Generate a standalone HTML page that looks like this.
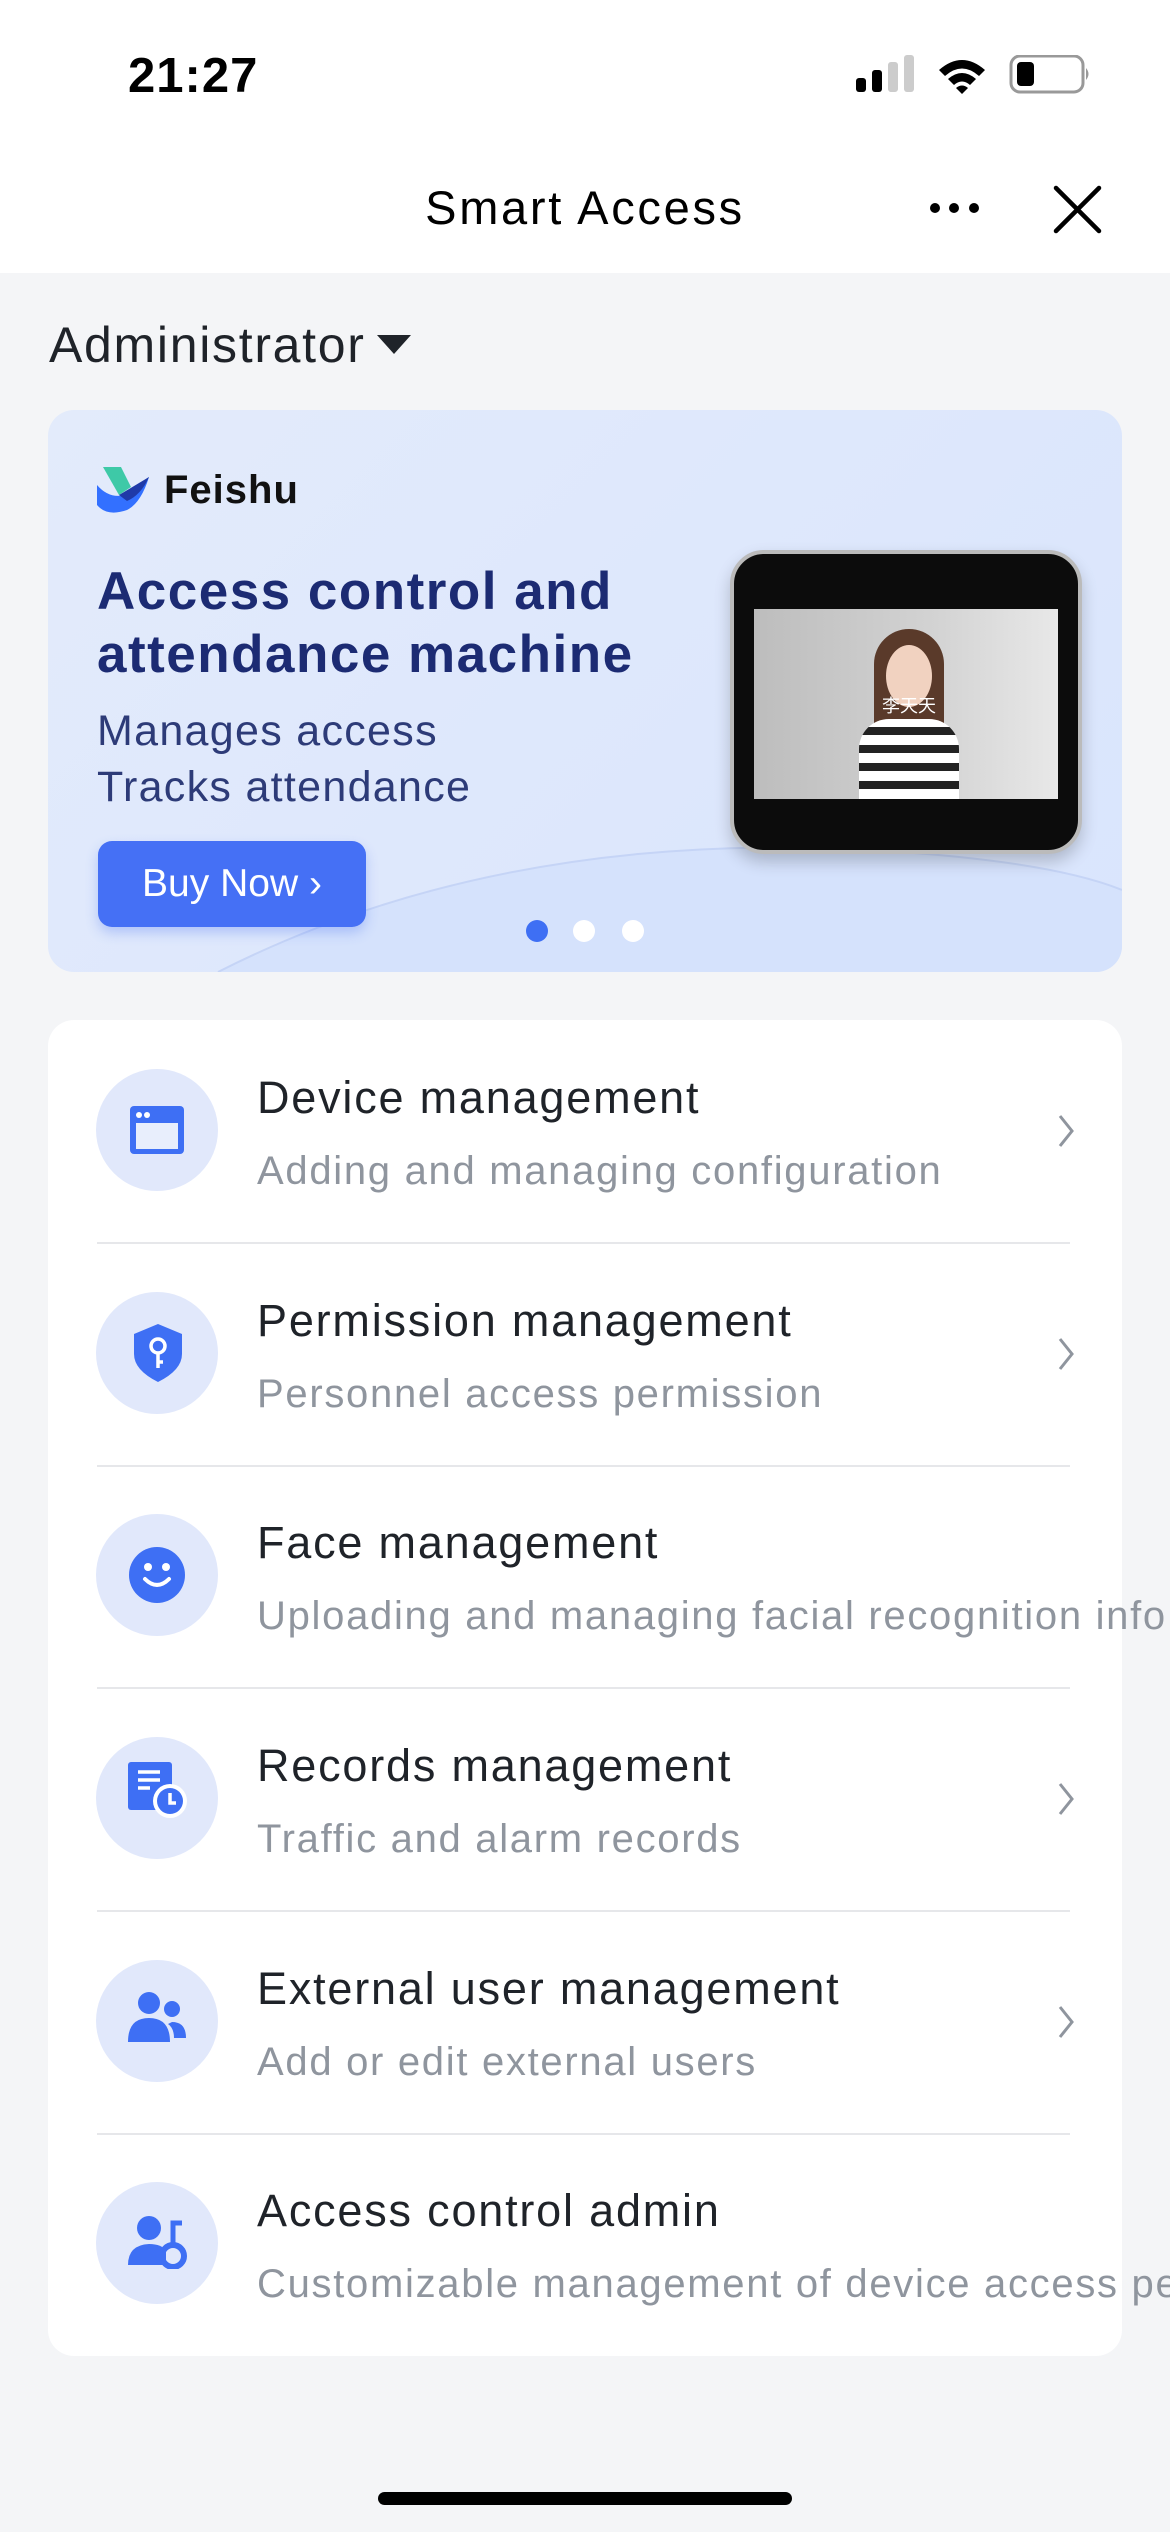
<!DOCTYPE html>
<html><head><meta charset="utf-8"><style>
*{margin:0;padding:0;box-sizing:border-box}
html,body{overflow:hidden}
body{width:1170px;height:2532px;overflow:hidden;background:#f4f5f7;font-family:"Liberation Sans","Noto Sans CJK SC",sans-serif;position:relative}
.abs{position:absolute}
.hdr{left:0;top:0;width:1170px;height:273px;background:#fff}
.t{white-space:nowrap;line-height:1}
.card{left:48px;top:1020px;width:1074px;height:1336px;background:#fff;border-radius:26px}
.ic{width:122px;height:122px;border-radius:50%;background:#e1e8fb;left:96px}
.ttl{left:257px;font-size:45px;color:#1f2329;letter-spacing:1.8px}
.sub{left:257px;font-size:40px;color:#8f959e;letter-spacing:1.7px}
.sep{left:97px;width:973px;height:2px;background:#e6e7ea}
.chev{left:1052px}
.clip{left:0;top:0;width:1170px;height:2532px;overflow:hidden}
</style></head><body>
<div class="abs clip">
<div class="abs hdr"></div>
<div class="abs t" style="left:128px;top:52px;font-size:49px;font-weight:bold;color:#000;letter-spacing:1px">21:27</div>
<svg class="abs" style="left:850px;top:55px" width="240" height="45" viewBox="0 0 240 45">
<rect x="6" y="23" width="10" height="14" rx="3" fill="#000"/>
<rect x="22" y="15" width="10" height="22" rx="3" fill="#000"/>
<rect x="38" y="7" width="10" height="30" rx="3" fill="#ccc"/>
<rect x="54" y="0" width="10" height="37" rx="3" fill="#ccc"/>
<path d="M89 15 Q112 -5 135 15 L129 21 Q112 6 95 21Z" fill="#000"/>
<path d="M98 24 Q112 12 126 24 L120 30 Q112 23 104 30Z" fill="#000"/>
<path d="M106 33 Q112 28 118 33 L112 39Z" fill="#000"/>
<rect x="161" y="1" width="72" height="36" rx="9" fill="none" stroke="#999" stroke-width="3"/>
<rect x="167" y="7" width="17" height="24" rx="4" fill="#000"/>
<path d="M236 13 Q241 19 236 25Z" fill="#999"/>
</svg>
<div class="abs t" style="left:0;width:1170px;text-align:center;top:184px;font-size:47px;color:#000;letter-spacing:2.7px">Smart Access</div>
<svg class="abs" style="left:925px;top:198px" width="60" height="20"><circle cx="10" cy="10" r="5"/><circle cx="29" cy="10" r="5"/><circle cx="49" cy="10" r="5"/></svg>
<svg class="abs" style="left:1050px;top:182px" width="55" height="55"><path d="M6 6L49 49M49 6L6 49" stroke="#000" stroke-width="4.5" stroke-linecap="round"/></svg>
<div class="abs t" style="left:49px;top:320px;font-size:50px;color:#1f2329;letter-spacing:1.7px">Administrator</div>
<svg class="abs" style="left:377px;top:335px" width="34" height="22"><path d="M0 0H34L17 19Z" fill="#1f2329"/></svg>

<div class="abs" style="left:48px;top:410px;width:1074px;height:562px;border-radius:26px;overflow:hidden;background:linear-gradient(135deg,#e3ebfb,#dde7fc 60%,#d9e5fd)">
<svg class="abs" style="left:0;top:0" width="1074" height="562"><path d="M170 562 Q450 420 820 440 Q1000 450 1074 480 L1074 562Z" fill="#d5e2fc"/><path d="M170 562 Q450 420 820 440 Q1000 450 1074 480" fill="none" stroke="#c5d4f6" stroke-width="2"/></svg>
<svg class="abs" style="left:49px;top:55px" width="60" height="50"><path d="M6 2H24L34 22L22 30Z" fill="#3ec9a7"/><path d="M0 20Q12 34 28 30L52 12Q44 38 30 45Q10 52 0 40Z" fill="#3370ff"/><path d="M22 30L52 12Q44 30 30 36Z" fill="#1f3aa8"/></svg>
<div class="abs t" style="left:116px;top:60px;font-size:40px;font-weight:bold;color:#111;letter-spacing:1px">Feishu</div>
<div class="abs t" style="left:49px;top:150px;font-size:53px;font-weight:bold;color:#1c2b73;line-height:63px;letter-spacing:1.5px">Access control and<br>attendance machine</div>
<div class="abs t" style="left:49px;top:293px;font-size:43px;color:#2d3b78;line-height:56px;letter-spacing:1.3px">Manages access<br>Tracks attendance</div>
<div class="abs t" style="left:50px;top:431px;width:268px;height:86px;border-radius:14px;background:#4570f5;color:#fff;font-size:39px;text-align:center;line-height:86px;box-shadow:0 6px 12px rgba(69,112,245,.3)">Buy Now ›</div>
<div class="abs" style="left:478px;top:510px;width:22px;height:22px;border-radius:50%;background:#3e6ff4"></div>
<div class="abs" style="left:525px;top:510px;width:22px;height:22px;border-radius:50%;background:#fff"></div>
<div class="abs" style="left:574px;top:510px;width:22px;height:22px;border-radius:50%;background:#fff"></div>
<div class="abs" style="left:682px;top:140px;width:352px;height:304px;border-radius:34px;background:#0c0c0c;border:4px solid #bbb;box-shadow:0 8px 16px rgba(0,0,0,.2);overflow:hidden">
<div class="abs" style="left:20px;top:55px;width:304px;height:190px;background:linear-gradient(90deg,#bdbdbd,#d3d3d3 60%,#e8e8e8);overflow:hidden">
<div class="abs" style="left:120px;top:20px;width:70px;height:110px;border-radius:35px 35px 10px 10px;background:#5a3a2a"></div>
<div class="abs" style="left:132px;top:36px;width:46px;height:62px;border-radius:50%;background:#f1d2c0"></div>
<div class="abs" style="left:105px;top:110px;width:100px;height:80px;border-radius:30px 30px 0 0;background:repeating-linear-gradient(0deg,#fff 0 10px,#222 10px 18px)"></div>
<div class="abs t" style="left:128px;top:88px;font-size:18px;color:#fff">李天天</div>
</div>
</div>
</div>

<div class="abs card"></div>
<div class="abs ic" style="top:1069px"></div>
<svg class="abs" style="left:130px;top:1103px" width="54" height="54"><rect x="0" y="3" width="54" height="48" rx="4" fill="#3e6ff4"/><rect x="6" y="20" width="42" height="26" fill="#e8eefc"/><circle cx="9" cy="12" r="3" fill="#fff"/><circle cx="17" cy="12" r="3" fill="#fff"/></svg>
<div class="abs ic" style="top:1292px"></div>
<svg class="abs" style="left:132px;top:1322px" width="52" height="62"><path d="M26 2L50 12V32Q50 48 26 60Q2 48 2 32V12Z" fill="#3e6ff4"/><circle cx="26" cy="24" r="7" fill="none" stroke="#fff" stroke-width="3.5"/><path d="M26 31V46M26 40H31" stroke="#fff" stroke-width="3.5"/></svg>
<div class="abs ic" style="top:1514px"></div>
<svg class="abs" style="left:127px;top:1545px" width="60" height="60"><circle cx="30" cy="30" r="28" fill="#3e6ff4"/><circle cx="21" cy="22" r="4" fill="#fff"/><circle cx="39" cy="22" r="4" fill="#fff"/><path d="M18 34Q30 46 42 34" stroke="#fff" stroke-width="4" fill="none" stroke-linecap="round"/></svg>
<div class="abs ic" style="top:1737px"></div>
<svg class="abs" style="left:128px;top:1762px" width="64" height="58"><rect x="0" y="0" width="44" height="48" rx="3" fill="#3e6ff4"/><path d="M10 10H32M10 18H32M10 26H22" stroke="#fff" stroke-width="3.5"/><circle cx="42" cy="39" r="17" fill="#fff"/><circle cx="42" cy="39" r="13" fill="#3e6ff4"/><path d="M42 31V41H48" stroke="#fff" stroke-width="3.5" fill="none"/></svg>
<div class="abs ic" style="top:1960px"></div>
<svg class="abs" style="left:128px;top:1992px" width="60" height="50"><circle cx="21" cy="11" r="11" fill="#3e6ff4"/><path d="M0 50Q0 26 21 26Q42 26 42 50Z" fill="#3e6ff4"/><circle cx="44" cy="17" r="8" fill="#3e6ff4"/><path d="M44 30Q58 30 58 46H46Q46 36 40 32Z" fill="#3e6ff4"/></svg>
<div class="abs ic" style="top:2182px"></div>
<svg class="abs" style="left:128px;top:2213px" width="60" height="56"><circle cx="21" cy="15" r="12" fill="#3e6ff4"/><path d="M0 52Q0 32 21 31Q34 31 38 38V52Z" fill="#3e6ff4"/><circle cx="45" cy="43" r="11" fill="none" stroke="#3e6ff4" stroke-width="6"/><path d="M45 32V10H54" stroke="#3e6ff4" stroke-width="5" fill="none"/></svg>

<div class="abs t ttl" style="top:1075px">Device management</div>
<div class="abs t sub" style="top:1151px">Adding and managing configuration</div>
<div class="abs sep" style="top:1242px"></div>
<div class="abs t ttl" style="top:1298px">Permission management</div>
<div class="abs t sub" style="top:1374px">Personnel access permission</div>
<div class="abs sep" style="top:1465px"></div>
<div class="abs t ttl" style="top:1520px">Face management</div>
<div class="abs t sub" style="top:1596px">Uploading and managing facial recognition info</div>
<div class="abs sep" style="top:1687px"></div>
<div class="abs t ttl" style="top:1743px">Records management</div>
<div class="abs t sub" style="top:1819px">Traffic and alarm records</div>
<div class="abs sep" style="top:1910px"></div>
<div class="abs t ttl" style="top:1966px">External user management</div>
<div class="abs t sub" style="top:2042px">Add or edit external users</div>
<div class="abs sep" style="top:2133px"></div>
<div class="abs t ttl" style="top:2188px">Access control admin</div>
<div class="abs t sub" style="top:2264px">Customizable management of device access permissions</div>

<svg class="abs chev" style="top:1113px" width="30" height="36"><path d="M8 3L20 18L8 33" stroke="#8f959e" stroke-width="3" fill="none"/></svg>
<svg class="abs chev" style="top:1336px" width="30" height="36"><path d="M8 3L20 18L8 33" stroke="#8f959e" stroke-width="3" fill="none"/></svg>
<svg class="abs chev" style="top:1781px" width="30" height="36"><path d="M8 3L20 18L8 33" stroke="#8f959e" stroke-width="3" fill="none"/></svg>
<svg class="abs chev" style="top:2004px" width="30" height="36"><path d="M8 3L20 18L8 33" stroke="#8f959e" stroke-width="3" fill="none"/></svg>

<div class="abs" style="left:378px;top:2492px;width:414px;height:13px;border-radius:7px;background:#000"></div>
</div>
</body></html>
